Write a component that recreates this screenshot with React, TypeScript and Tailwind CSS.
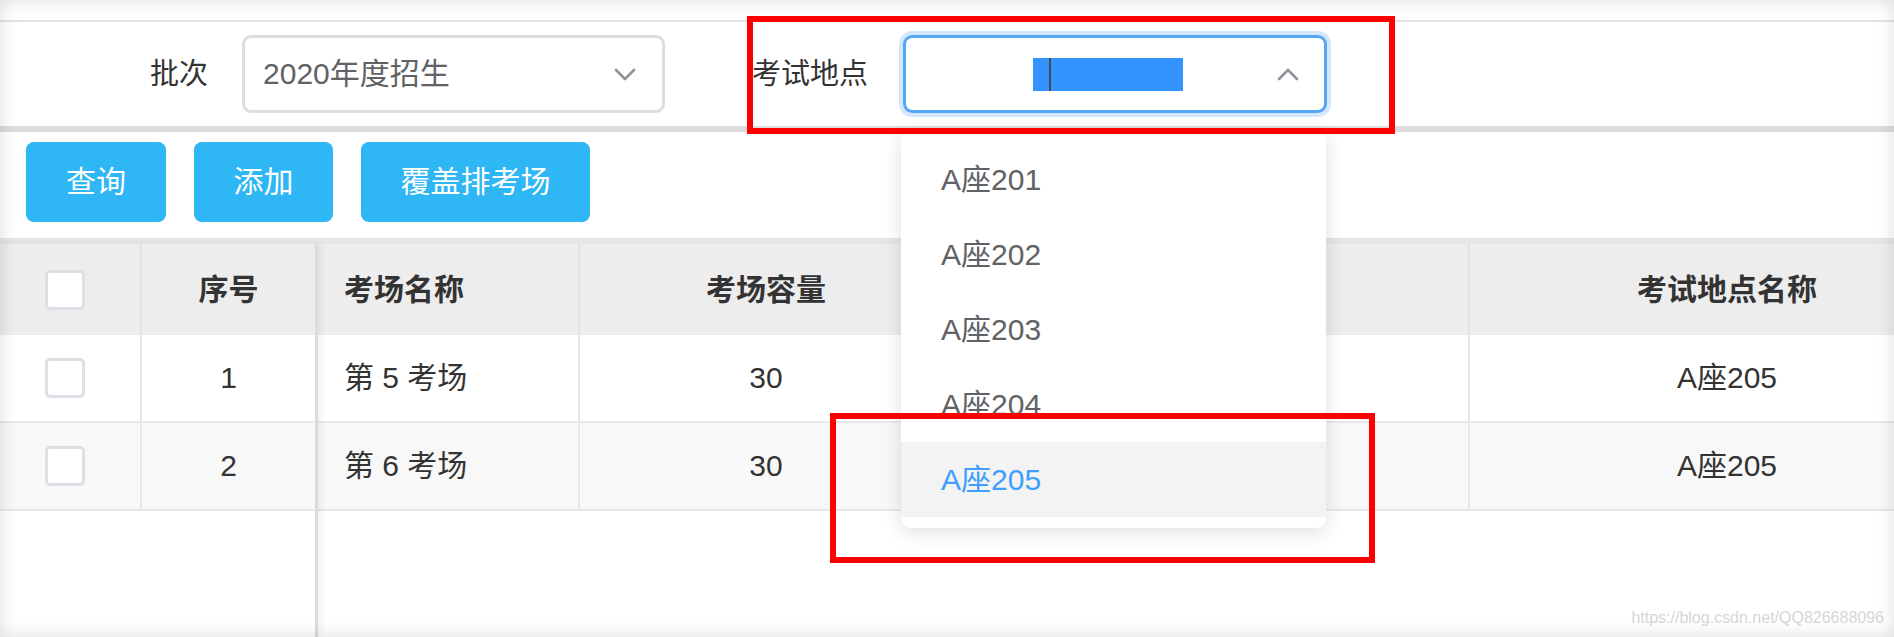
import React from "react";

const options = ["A座201", "A座202", "A座203", "A座204", "A座205"];

const rows = [
    { no: 1, name: "第 5 考场", size: 30, place: "A座205", striped: false },
    { no: 2, name: "第 6 考场", size: 30, place: "A座205", striped: true }
];

const Chevron = ({ up = false }: { up?: boolean }) => (
    <svg width="22" height="13" viewBox="0 0 22 13" fill="none" className="shrink-0">
        <polyline
            points={up ? "2,11 11,2 20,11" : "2,2 11,11 20,2"}
            stroke="#8d929b"
            strokeWidth="2.6"
            strokeLinecap="round"
            strokeLinejoin="round"
        />
    </svg>
);

const Checkbox = () => (
    <span className="block h-[40px] w-[40px] rounded-[5px] border-[3px] border-[#dcdfe6] bg-white" />
);

export default function App() {
    return (
        <div className="relative h-[637px] w-[1894px] overflow-hidden bg-white font-['Liberation_Sans','Noto_Sans_CJK_SC',sans-serif] text-[30px] leading-none text-[#333333]">
            <div className="h-[22px] border-b-2 border-[#e2e2e2] bg-white" />

            {/* filter form */}
            <div className="flex h-[104px] items-center pl-[150px]">
                <span className="text-[29px] text-[#333333]">批次</span>
                <div className="ml-[34px] flex h-[78px] w-[423px] items-center justify-between rounded-[9px] border-[3px] border-[#dcdee3] pl-[18px] pr-[26px]">
                    <span className="text-[#606266]">2020年度招生</span>
                    <Chevron />
                </div>
                <span className="ml-[87px] text-[29px] text-[#333333]">考试地点</span>
                <div className="ml-[35px] flex h-[78px] w-[424px] items-center justify-between rounded-[9px] border-[3px] border-[#56a5f6] pl-[127px] pr-[25px] shadow-[0_0_0_4px_#d4e7fc]">
                    <span className="relative block h-[33px] w-[150px] bg-[#3393ff]">
                        <span className="absolute left-[16px] top-0 h-full w-[2px] bg-[#4a4a4a]" />
                    </span>
                    <Chevron up />
                </div>
            </div>
            <div className="h-[6px] bg-[#dddddd]" />

            {/* actions */}
            <div className="flex h-[106px] gap-[28px] pl-[26px] pt-[10px]">
                <button type="button" className="flex h-[80px] w-[140px] items-center justify-center rounded-[8px] bg-[#2fb6f4] text-white">查询</button>
                <button type="button" className="flex h-[80px] w-[139px] items-center justify-center rounded-[8px] bg-[#2fb6f4] text-white">添加</button>
                <button type="button" className="flex h-[80px] w-[229px] items-center justify-center rounded-[8px] bg-[#2fb6f4] text-white">覆盖排考场</button>
            </div>
            <div className="h-[6px] bg-[#e6e6e6]" />

            {/* table */}
            <div className="flex h-[393px]">
                <div className="relative z-10 w-[318px] shrink-0 border-r-[3px] border-[#dcdcdc] bg-white shadow-[3px_0_6px_rgba(0,0,0,0.06)]">
                    <div className="flex h-[91px] bg-[#ededed] font-bold">
                        <div className="flex w-[142px] items-center border-r-2 border-[#e2e2e2] pl-[45px]">
                            <Checkbox />
                        </div>
                        <div className="flex flex-1 items-center justify-center">序号</div>
                    </div>
                    {rows.map((row) => (
                        <div
                            key={row.no}
                            className={`flex h-[88px] border-b-2 border-[#e8e8e8] ${row.striped ? "bg-[#f8f8f8]" : "bg-white"}`}
                        >
                            <div className="flex w-[142px] items-center border-r-2 border-[#e8e8e8] pl-[45px]">
                                <Checkbox />
                            </div>
                            <div className="flex flex-1 items-center justify-center">{row.no}</div>
                        </div>
                    ))}
                </div>

                <div className="min-w-0 flex-1 overflow-hidden">
                    <div className="w-[1666px]">
                        <div className="flex h-[91px] bg-[#ededed] font-bold">
                            <div className="flex w-[262px] items-center border-r-2 border-[#e2e2e2] pl-[26px]">考场名称</div>
                            <div className="flex w-[374px] items-center justify-center border-r-2 border-[#e2e2e2]">考场容量</div>
                            <div className="flex w-[516px] items-center justify-center border-r-2 border-[#e2e2e2]" />
                            <div className="flex w-[514px] items-center justify-center">考试地点名称</div>
                        </div>
                        {rows.map((row) => (
                            <div
                                key={row.no}
                                className={`flex h-[88px] border-b-2 border-[#e8e8e8] ${row.striped ? "bg-[#f8f8f8]" : "bg-white"}`}
                            >
                                <div className="flex w-[262px] items-center border-r-2 border-[#e8e8e8] pl-[26px]">{row.name}</div>
                                <div className="flex w-[374px] items-center justify-center border-r-2 border-[#e8e8e8]">{row.size}</div>
                                <div className="flex w-[516px] items-center justify-center border-r-2 border-[#e8e8e8]" />
                                <div className="flex w-[514px] items-center justify-center">{row.place}</div>
                            </div>
                        ))}
                    </div>
                </div>
            </div>

            {/* open select menu */}
            <div className="absolute left-[901px] top-[130px] z-20 w-[425px] rounded-[9px] bg-white pb-[11px] pt-[12px] shadow-[0_4px_20px_rgba(0,0,0,0.13)]">
                {options.map((option, index) => (
                    <div
                        key={option}
                        className={`flex h-[75px] items-center pl-[40px] ${index === options.length - 1 ? "bg-[#f3f3f3] text-[#409eff]" : "text-[#606266]"}`}
                    >
                        {option}
                    </div>
                ))}
            </div>

            {/* annotation boxes */}
            <div className="absolute left-[747px] top-[16px] z-30 h-[118px] w-[648px] border-[6px] border-[#ff0000]" />
            <div className="absolute left-[830px] top-[413px] z-30 h-[150px] w-[545px] border-[6px] border-[#ff0000]" />

            <div className="absolute bottom-[11px] right-[10px] z-30 font-['Liberation_Sans',sans-serif] text-[16px] text-[#d6d6d6]">
                https://blog.csdn.net/QQ826688096
            </div>

            <div className="pointer-events-none absolute inset-0 z-40 shadow-[inset_0_0_18px_rgba(0,0,0,0.14)]" />
        </div>
    );
}
